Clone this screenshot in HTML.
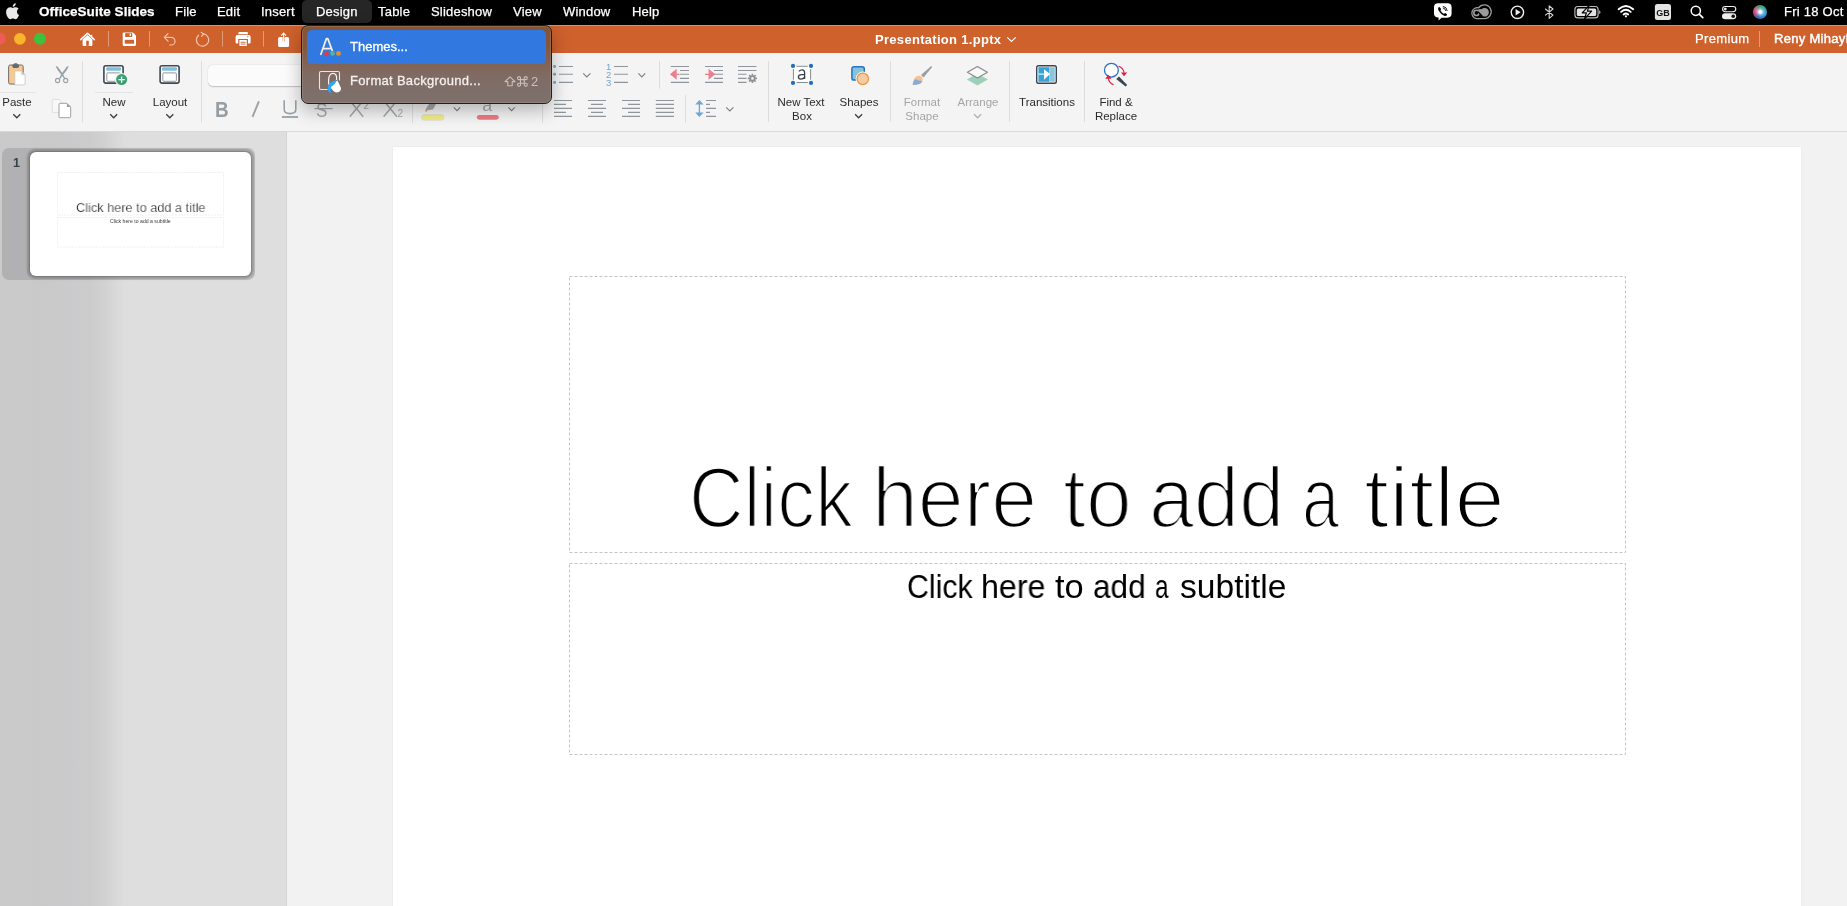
<!DOCTYPE html>
<html><head><meta charset="utf-8">
<style>
*{margin:0;padding:0;box-sizing:border-box}
html,body{width:1847px;height:906px;overflow:hidden;background:#f2f2f2;font-family:"Liberation Sans",sans-serif}
.a{position:absolute}
svg{will-change:transform}
.t{position:absolute;line-height:1;white-space:nowrap;will-change:transform;font-family:"Liberation Sans",sans-serif}
#menubar{left:0;top:0;width:1847px;height:25px;background:#000}
#menubar .t{color:#fff;font-size:13px;top:5px;letter-spacing:0.2px;-webkit-text-stroke:0.25px #fff}
#titlebar{left:0;top:25px;width:1847px;height:28px;background:#cf612c}
#toolbar{left:0;top:53px;width:1847px;height:79px;background:#f4f4f4;border-bottom:1px solid #d9d9d9;z-index:1}
#leftpanel{left:0;top:131px;width:287px;height:775px;border-right:1px solid #d3d3d3;
 background:linear-gradient(to right,#cacaca 0px,#c9c9ca 40px,#cac9cb 65px,#cccccd 90px,#d1d1d2 104px,#d8d8d8 115px,#dddddd 124px,#dedede 132px,#dedede 287px)}
#main{left:287px;top:131px;width:1560px;height:775px;background:#f2f2f2}
#slide{left:393px;top:147px;width:1408px;height:800px;background:#fff;box-shadow:0 0 1.5px rgba(0,0,0,0.08)}
.lbl{font-size:11.5px;color:#2b2b2b}
.tw{top:307.6px;font-size:85.6px;color:#000;-webkit-text-stroke:2.6px #fff;transform-origin:0 0}
.sw{top:424px;font-size:32.5px;color:#000;transform-origin:0 0}
.sep{position:absolute;width:1px;background:#dcdcdc}
</style></head><body>
<div id="menubar" class="a">
  <div class="t" style="left:39px;font-weight:bold;font-size:13.5px;letter-spacing:0.05px">OfficeSuite Slides</div>
  <div class="t" style="left:175px">File</div>
  <div class="t" style="left:217px">Edit</div>
  <div class="t" style="left:261px">Insert</div>
  <div class="a" style="left:302px;top:0;width:70px;height:23px;background:#262626;border-radius:5px"></div>
  <div class="t" style="left:316px">Design</div>
  <div class="t" style="left:378px">Table</div>
  <div class="t" style="left:431px">Slideshow</div>
  <div class="t" style="left:513px">View</div>
  <div class="t" style="left:563px">Window</div>
  <div class="t" style="left:632px">Help</div>
  <div class="t" style="left:1783.5px;letter-spacing:0.25px">Fri 18 Oct</div>
  <div class="a" style="left:1753px;top:4.8px;width:14px;height:14px;border-radius:50%;background:radial-gradient(circle at 52% 50%,#ffffff 0,#f0f6ff 14%,rgba(200,220,255,0.5) 30%,rgba(0,0,0,0) 55%),conic-gradient(from 10deg,#38a874 0deg,#2f9be0 100deg,#2f64b0 190deg,#c8467a 250deg,#e0587a 290deg,#5a8a7a 330deg,#38a874 360deg)"></div>
  <svg class="a" style="left:0;top:0" width="1847" height="24">
    <!-- apple -->
    <path transform="translate(1.3 -0.5)" d="M15.6 12.3c0-2 1.6-2.9 1.7-3-0.9-1.4-2.4-1.6-2.9-1.6-1.2-0.1-2.4 0.7-3 0.7-0.6 0-1.6-0.7-2.6-0.7-1.3 0-2.6 0.8-3.3 2-1.4 2.4-0.4 6 1 8 0.7 1 1.5 2 2.5 2 1 0 1.4-0.6 2.6-0.6 1.2 0 1.5 0.6 2.6 0.6 1.1 0 1.8-1 2.4-2 0.8-1.1 1.1-2.2 1.1-2.3 0 0-2.1-0.8-2.1-3.1z M13.7 6.2c0.5-0.7 0.9-1.6 0.8-2.5-0.8 0-1.7 0.5-2.3 1.2-0.5 0.6-0.9 1.5-0.8 2.4 0.9 0.1 1.7-0.4 2.300-1.1z" fill="#e9e9e9"/>
    <!-- viber -->
    <path d="M1438 3.2 H1447.5 Q1451.6 3.2 1451.6 7.3 V13.6 Q1451.6 17.7 1447.5 17.7 H1441.5 L1438.6 20.4 V17.6 Q1434 17.3 1434 13.4 V7.3 Q1434 3.2 1438 3.2 Z" fill="#fff"/>
    <path d="M1438.4 7.6 Q1439.2 6.6 1440 7.4 L1441 8.8 Q1441.3 9.5 1440.6 10 Q1440.4 10.4 1440.8 11 Q1441.8 12.6 1443.3 13.5 Q1443.9 13.8 1444.3 13.4 Q1444.9 12.8 1445.6 13.2 L1446.9 14.2 Q1447.5 14.9 1446.6 15.6 Q1445.6 16.4 1444.2 15.8 Q1440.5 14 1438.4 10.2 Q1437.8 8.6 1438.4 7.6 Z" fill="#000"/>
    <path d="M1443.2 6.4 Q1446.8 6.8 1447.2 10.6 M1443.2 8 Q1445.4 8.3 1445.7 10.5" fill="none" stroke="#000" stroke-width="0.9" stroke-linecap="round"/>
    <!-- creative cloud -->
    <path d="M1476.2 18.6 H1484.6 A6.9 6.9 0 1 0 1478.6 7.8 A5.4 5.4 0 0 0 1476.2 18.6 Z" fill="none" stroke="#9a9a9a" stroke-width="1.3"/>
    <circle cx="1476.4" cy="12.9" r="2.6" fill="none" stroke="#9a9a9a" stroke-width="1.6"/>
    <path d="M1477.5 9.9 Q1480 8.6 1481.6 9.2 A4.3 4.3 0 1 1 1481.5 15.3 Z" fill="#9a9a9a"/>
    <path d="M1477.6 11.4 L1482.3 16.2" stroke="#000" stroke-width="1.3"/>
    <!-- play -->
    <circle cx="1517.4" cy="12.3" r="6.2" fill="none" stroke="#f0f0f0" stroke-width="1.4"/>
    <path d="M1515.6 9.1 L1520.6 12.3 L1515.6 15.5 Z" fill="#f0f0f0"/>
    <!-- bluetooth -->
    <path d="M1545.2 8.8 L1553 15.2 L1549.2 18.4 V5.8 L1553 9 L1545.2 15.4" fill="none" stroke="#d8d8d8" stroke-width="1.1" stroke-linejoin="round"/>
    <!-- battery -->
    <rect x="1574.9" y="6.5" width="23.2" height="11.4" rx="3" fill="none" stroke="#bdbdbd" stroke-width="1.1"/>
    <rect x="1576.8" y="8.4" width="19.4" height="7.6" rx="1.5" fill="#e2e2e2"/>
    <path d="M1599.2 10.3 Q1600.4 11 1600.4 12.2 Q1600.4 13.4 1599.2 14.1 Z" fill="#bdbdbd"/>
    <path d="M1589 5.6 L1582.2 12.9 H1586.4 L1584.6 18.8 L1591.6 11.2 H1587.4 Z" fill="#e2e2e2" stroke="#000" stroke-width="1.2" stroke-linejoin="round"/>
    <!-- wifi -->
    <g fill="none" stroke="#fff" stroke-width="1.9" stroke-linecap="round">
      <path d="M1618.6 9.2 Q1625.9 2.6 1633.2 9.2"/>
      <path d="M1621.1 11.9 Q1625.9 7.8 1630.7 11.9"/>
      <path d="M1623.6 14.5 Q1625.9 12.6 1628.2 14.5"/>
    </g>
    <circle cx="1625.9" cy="16.3" r="1.1" fill="#fff"/>
    <!-- GB -->
    <rect x="1654.9" y="3.9" width="16.1" height="16" rx="2.5" fill="#e4e4e4"/>
    <text x="1662.9" y="15.6" text-anchor="middle" style="font-family:'Liberation Sans'" font-weight="bold" font-size="9" fill="#111">GB</text>
    <!-- search -->
    <circle cx="1695.8" cy="10.8" r="4.6" fill="none" stroke="#fff" stroke-width="1.5"/>
    <path d="M1699.2 14.2 L1702.8 17.6" stroke="#fff" stroke-width="1.7" stroke-linecap="round"/>
    <!-- control centre -->
    <rect x="1722.6" y="6.5" width="13.2" height="5.2" rx="2.6" fill="none" stroke="#eee" stroke-width="1.1"/>
    <circle cx="1725.3" cy="9.1" r="1.4" fill="#eee"/>
    <rect x="1722" y="13.2" width="14.2" height="6" rx="3" fill="#eee"/>
    <circle cx="1733.2" cy="16.2" r="1.8" fill="#111"/>
    </svg>
</div>
<div id="titlebar" class="a">
  <svg class="a" style="left:0;top:0" width="1847" height="28" viewBox="0 25 1847 28">
    <circle cx="-0.3" cy="38.8" r="6" fill="#ef5b5b"/>
    <circle cx="19.9" cy="38.8" r="5.9" fill="#f8b52a"/>
    <circle cx="40" cy="38.8" r="6" fill="#3ec13f"/>
    <!-- home -->
    <path d="M80.6 39.6 L87.5 33.2 L94.4 39.6" fill="none" stroke="#fff" stroke-width="1.5" stroke-linejoin="round" stroke-linecap="round"/>
    <path d="M91.6 34.8 V37" stroke="#fff" stroke-width="1.3"/>
    <path d="M82.6 39.6 L87.5 35 L92.4 39.6 V45 Q92.4 45.9 91.5 45.9 H83.5 Q82.6 45.9 82.6 45 Z" fill="#fff"/>
    <rect x="86.2" y="40.7" width="2.6" height="5.2" fill="#cf612c"/>
    <!-- save -->
    <path d="M123.8 32.6 H133 L136 35.6 V44.8 Q136 45.9 134.9 45.9 H123.8 Q122.7 45.9 122.7 44.8 V33.7 Q122.7 32.6 123.8 32.6 Z" fill="#fff"/>
    <rect x="125.2" y="33.2" width="7" height="3.8" fill="#cf612c"/>
    <rect x="129.6" y="33.6" width="1.4" height="2.6" fill="#fff"/>
    <rect x="124.8" y="39.8" width="9.2" height="3.9" fill="#cf612c"/>
    <!-- separators -->
    <g fill="#e39a76"><rect x="108" y="31" width="1" height="15.6"/><rect x="149" y="31" width="1" height="15.6"/><rect x="222" y="31" width="1" height="15.6"/><rect x="263" y="31" width="1" height="15.6"/></g>
    <!-- undo -->
    <g fill="none" stroke="#f2c4ac" stroke-width="1.2" stroke-linecap="round" stroke-linejoin="round">
      <path d="M168 33.6 L164.3 37.4 L168 41.2"/>
      <path d="M164.6 37.4 H171.2 A3.8 3.8 0 0 1 171.2 45 H169.6"/>
      <!-- redo -->
      <path d="M203.8 33.9 A6.2 6.2 0 1 1 198.6 35.2"/>
      <path d="M201.2 32.3 L203.6 34 L201.6 36.4"/>
    </g>
    <!-- print -->
    <path d="M238.6 32.1 H247.6 L248 34.2 H238.2 Z" fill="#fff"/>
    <path d="M237.3 35 H248.9 Q250.6 35 250.6 36.7 V42.6 Q250.6 43.6 249.6 43.6 H248 V39 H238.2 V43.6 H236.6 Q235.6 43.6 235.6 42.6 V36.7 Q235.6 35 237.3 35 Z" fill="#fff"/>
    <rect x="239.4" y="40" width="7.4" height="6.1" rx="0.6" fill="#fff"/>
    <rect x="240.6" y="41.8" width="5" height="0.9" fill="#cf612c"/>
    <rect x="240.6" y="43.6" width="5" height="0.9" fill="#cf612c"/>
    <circle cx="247.8" cy="36.7" r="0.6" fill="#cf612c"/>
    <!-- share -->
    <path d="M279.6 36.9 H282.7 V41.5 H284.5 V36.9 H287.6 Q289.1 36.9 289.1 38.4 V45.4 Q289.1 46.9 287.6 46.9 H279.6 Q278.1 46.9 278.1 45.4 V38.4 Q278.1 36.9 279.6 36.9 Z" fill="#fff"/>
    <path d="M283.6 42 V33.6" stroke="#fff" stroke-width="1.1"/>
    <path d="M281.2 35.6 L283.6 33 L286 35.6" fill="none" stroke="#fff" stroke-width="1.1"/>
    <!-- title chevron -->
    <path d="M1007.3 37.4 L1011.5 41.4 L1015.7 37.4" fill="none" stroke="#fff" stroke-width="1.2"/>
  </svg>
  <div class="t" style="left:875px;top:8px;font-size:13px;font-weight:bold;color:#fff;letter-spacing:0.3px">Presentation 1.pptx</div>
  <div class="a" style="left:0;top:0;width:1847px;height:1px;background:#e0906a"></div>
  <div class="t" style="left:1695px;top:7.4px;font-size:13px;color:#fff;letter-spacing:0.35px;-webkit-text-stroke:0.25px #fff">Premium</div>
  <div class="a" style="left:1759px;top:6px;width:1px;height:15.6px;background:#e39a76"></div>
  <div class="t" style="left:1774px;top:7.4px;font-size:13px;color:#fff;letter-spacing:0.3px;-webkit-text-stroke:0.45px #fff">Reny Mihaylova</div>
</div>
<div id="toolbar" class="a">
  <div class="a" style="left:207.8px;top:11.5px;width:120px;height:21px;border-radius:5px;background:#fbfbfb;box-shadow:0 0.6px 1.2px rgba(0,0,0,0.22)"></div>
  <svg class="a" style="left:0;top:0" width="1847" height="78" viewBox="0 53 1847 78">
    <!-- separators -->
    <g fill="#dddddd">
      <rect x="82" y="61.4" width="1" height="61"/>
      <rect x="201" y="61" width="1" height="61.5"/>
      <rect x="412" y="95" width="1" height="28"/>
      <rect x="542" y="95" width="1" height="28"/>
      <rect x="659" y="61" width="1" height="27.6"/>
      <rect x="685" y="95" width="1" height="28"/>
      <rect x="768" y="61" width="1" height="61"/>
      <rect x="890" y="61" width="1" height="61"/>
      <rect x="1009" y="61" width="1" height="61"/>
      <rect x="1084" y="61" width="1" height="61"/>
      <rect x="0" y="92" width="36" height="1" fill="#e3e3e3"/>
      <rect x="95" y="92" width="38" height="1" fill="#e3e3e3"/>
    </g>
    <!-- paste -->
    <rect x="8.6" y="65" width="14.6" height="19.1" rx="1.6" fill="#f9c88c" stroke="#5d6368" stroke-width="0.9"/>
    <rect x="12.4" y="64.2" width="6.6" height="3.7" rx="1.4" fill="#62696f"/>
    <rect x="14" y="63.2" width="3.4" height="1.6" rx="0.8" fill="#62696f"/>
    <path d="M15.6 71 H21.4 L25.1 74.7 V84 Q25.1 84.9 24.2 84.9 H15.7 Q14.8 84.9 14.8 84 V71.8 Q14.8 71 15.6 71 Z" fill="#fff" stroke="#c2c5c8" stroke-width="0.8"/>
    <path d="M21.4 71 L25.1 74.7 H21.4 Z" fill="#bfc3c6"/>
    <!-- scissors -->
    <path d="M55.6 66.2 Q56.6 66 57.6 66.6 L62.6 73.6 Q63.6 75.4 64.6 77.2 L65.4 78.5 L64.4 78.9 L61.4 75 Q57.2 70.2 55.6 66.2 Z" fill="#9aa0a4"/>
    <path d="M68.8 66.2 Q67.8 66 66.8 66.6 L61.8 73.6 Q60.8 75.4 59.8 77.2 L59 78.5 L60 78.9 L63 75 Q67.2 70.2 68.8 66.2 Z" fill="#9aa0a4"/>
    <g fill="none" stroke="#9aa0a4"><circle cx="57.6" cy="80.5" r="2.1" stroke-width="1.1"/><circle cx="65.7" cy="80.5" r="2.1" stroke-width="1.1"/></g>
    <circle cx="62.2" cy="74.3" r="0.9" fill="#7fb6dc"/>
    <!-- copy -->
    <path d="M53.1 99.4 H59 L61.5 101.9 V111.6 Q61.5 112.4 60.7 112.4 H53.1 Q52.3 112.4 52.3 111.6 V100.2 Q52.3 99.4 53.1 99.4 Z" fill="#f8f8f8" stroke="#dcdcdc" stroke-width="0.9"/>
    <path d="M59.8 103.3 H66.9 L70.7 107.1 V116.9 Q70.7 117.7 69.9 117.7 H59.8 Q59 117.7 59 116.9 V104.1 Q59 103.3 59.8 103.3 Z" fill="#fff" stroke="#9aa0a4" stroke-width="1"/>
    <path d="M66.9 103.3 L70.7 107.1 H66.9 Z" fill="#9aa0a4"/>
    <!-- new -->
    <rect x="103.9" y="65.7" width="19.2" height="17.4" rx="2" fill="#fff" stroke="#3d4852" stroke-width="1.6"/>
    <rect x="106.1" y="67.2" width="14.9" height="3.5" rx="1" fill="#7fc0dc"/>
    <rect x="106.8" y="72.9" width="13.8" height="8.4" rx="1" fill="#fff" stroke="#8a8a8a" stroke-width="0.9"/>
    <circle cx="121.6" cy="79.6" r="6.7" fill="#f4f4f4"/>
    <circle cx="121.6" cy="79.6" r="5.5" fill="#36a06e"/>
    <path d="M118.4 79.6 H124.8 M121.6 76.4 V82.8" stroke="#fff" stroke-width="1.4"/>
    <!-- layout -->
    <rect x="160.1" y="65.7" width="19" height="17.4" rx="2" fill="#fff" stroke="#3d4852" stroke-width="1.6"/>
    <rect x="162" y="67.2" width="15" height="3.5" rx="1" fill="#7fc0dc"/>
    <rect x="162.8" y="72.9" width="13.6" height="8.4" rx="1" fill="#fff" stroke="#8a8a8a" stroke-width="0.9"/>
    <!-- chevrons -->
    <g fill="none" stroke="#3a3f44" stroke-width="1.3">
      <path d="M13.3 114.3 L16.8 117.8 L20.3 114.3"/>
      <path d="M110.2 114.3 L113.7 117.8 L117.2 114.3"/>
      <path d="M166.3 114.3 L169.8 117.8 L173.3 114.3"/>
      <path d="M855.1 114.3 L858.6 117.8 L862.1 114.3"/>
    </g>
    <path d="M974.1 114.3 L977.6 117.8 L981.1 114.3" fill="none" stroke="#b0b0b0" stroke-width="1.3"/>
    <g fill="none" stroke="#7a7f84" stroke-width="1.1">
      <path d="M453.8 107.4 L457 110.6 L460.2 107.4"/>
      <path d="M508.4 107.4 L511.6 110.6 L514.8 107.4"/>
      <path d="M583.2 73.4 L586.8 77 L590.4 73.4"/>
      <path d="M638.4 73.4 L641.8 77 L645.2 73.4"/>
      <path d="M726.2 107.4 L729.8 111 L733.4 107.4"/>
    </g>
    <!-- B I U S X2 X2 -->
    <text x="215" y="117" style="font-family:'Liberation Sans'" font-weight="bold" font-size="22" fill="#969ea3" transform="translate(215 0) scale(0.86 1) translate(-215 0)">B</text>
    <path d="M258.9 101.3 L252.5 116.9" stroke="#9aa1a6" stroke-width="1.9"/>
    <path d="M284.2 100.2 V109.6 Q284.2 113.6 290 113.6 Q295.8 113.6 295.8 109.6 V100.2" fill="none" stroke="#9aa1a6" stroke-width="1.6"/>
    <rect x="281.9" y="116.1" width="16.1" height="1.8" fill="#9aa1a6"/>
    <text x="316" y="116.7" style="font-family:'Liberation Sans'" font-size="20" fill="#a3a9ad" transform="translate(316 0) scale(0.85 1) translate(-316 0)">S</text>
    <rect x="314.6" y="108" width="18" height="1.2" fill="#a3a9ad"/>
    <g stroke="#a3a9ad" stroke-width="1.5">
      <path d="M349.8 100.5 L363.2 116.7 M363.2 100.5 L349.8 116.7"/>
      <path d="M383.6 100.5 L397 116.7 M397 100.5 L383.6 116.7"/>
    </g>
    <text x="363.4" y="109" style="font-family:'Liberation Sans'" font-size="10" fill="#a3a9ad">2</text>
    <text x="397.4" y="116.9" style="font-family:'Liberation Sans'" font-size="10" fill="#a3a9ad">2</text>
    <!-- highlighter -->
    <path d="M425 110.6 L429.6 103 L438.4 99.6 L433 109.4 Z" fill="#a5a9ad"/>
    <path d="M425 110.6 L427.8 109 L426.4 112.6 Z" fill="#f09a6a"/>
    <rect x="421.6" y="114.6" width="22.4" height="5.6" rx="2.8" fill="#f2ed86" stroke="#dadad0" stroke-width="0.7"/>
    <text x="482.2" y="111" style="font-family:'Liberation Sans'" font-size="17" fill="#a3a9ad" transform="translate(482 0) scale(1.05 1) translate(-482 0)">a</text>
    <rect x="476.8" y="114.9" width="22" height="4.8" rx="2.4" fill="#ee7a82"/>
    <!-- bullets -->
    <g fill="#6fa6d6"><circle cx="554.6" cy="66.5" r="1.45"/><circle cx="554.6" cy="74.3" r="1.45"/><circle cx="554.6" cy="82.4" r="1.45"/></g>
    <g stroke="#8f959a" stroke-width="1.1" fill="none">
      <path d="M559 66.5 H573 M559 74.3 H573 M559 82.4 H573"/>
      <path d="M614 66.5 H628 M614 74.3 H628 M614 82.4 H628"/>
      <path d="M670.8 66.5 H689 M680 70.5 H689 M680 74.3 H689 M680 78.4 H689 M670.8 82.4 H689"/>
      <path d="M705 66.5 H723 M714 70.5 H723 M714 74.3 H723 M714 78.4 H723 M705 82.4 H723"/>
      <path d="M738 66.5 H756.5 M738 70.5 H756.5 M738 74.3 H746.5 M738 78.4 H746.5 M738 82.4 H746.5"/>
      <path d="M554 100.5 H572 M554 104.4 H566 M554 108.4 H572 M554 112.4 H566 M554 116.4 H572"/>
      <path d="M588 100.5 H606 M591 104.4 H603 M588 108.4 H606 M591 112.4 H603 M588 116.4 H606"/>
      <path d="M622 100.5 H640 M628 104.4 H640 M622 108.4 H640 M628 112.4 H640 M622 116.4 H640"/>
      <path d="M655.8 100.5 H674 M655.8 104.4 H674 M655.8 108.4 H674 M655.8 112.4 H674 M655.8 116.4 H674"/>
      <path d="M706 100.5 H716 M706 104.4 H710 M706 108.4 H716 M706 112.4 H710 M706 116.4 H716"/>
    </g>
    <g style="font-family:'Liberation Sans'" font-size="9.5" fill="#6fa6d6"><text x="606" y="70.2">1</text><text x="606" y="78">2</text><text x="606" y="86.1">3</text></g>
    <path d="M671 74.3 L676 70.2 V78.4 Z M675 74.3 H679.5" fill="#e8808f" stroke="#e8808f" stroke-width="1.3"/>
    <path d="M714.2 74.3 L709.2 70.2 V78.4 Z M705 74.3 H710" fill="#e8808f" stroke="#e8808f" stroke-width="1.3"/>
    <g transform="translate(752.4 78.4)" fill="#909090">
      <circle r="3.1"/>
      <g stroke="#909090" stroke-width="1.6"><path d="M0 -4.6 V4.6 M-4.6 0 H4.6 M-3.25 -3.25 L3.25 3.25 M3.25 -3.25 L-3.25 3.25"/></g>
      <circle r="1.3" fill="#f4f4f4"/>
    </g>
    <!-- line spacing -->
    <path d="M699.4 102.5 V114.5" stroke="#6fa6d6" stroke-width="1.3"/>
    <path d="M695.2 104.4 L699.4 99.9 L703.6 104.4 Z M695.2 112.6 L699.4 117.1 L703.6 112.6 Z" fill="#6fa6d6"/>
    <!-- new text box -->
    <rect x="793.4" y="66.3" width="17.2" height="16.3" fill="#fff"/>
    <g stroke="#878b90" stroke-width="1"><path d="M796.5 66.3 H807.8 M796.5 82.5 H807.8 M793.4 69.1 V79.7 M810.6 69.1 V79.7"/></g>
    <g fill="#1f6fc0"><circle cx="793" cy="65.9" r="2.1"/><circle cx="811" cy="65.9" r="2.1"/><circle cx="793" cy="82.9" r="2.1"/><circle cx="811" cy="82.9" r="2.1"/></g>
    <path d="M798.8 71.4 Q800.2 69.9 802 69.9 Q804.6 69.9 804.6 72.8 V79.1 M804.6 74.7 H801.6 Q798.4 74.7 798.4 77 Q798.4 79.1 800.8 79.1 Q803.4 79.1 804.6 77.1" fill="none" stroke="#3a4047" stroke-width="1.3"/>
    <!-- shapes -->
    <rect x="851.9" y="66.7" width="12.4" height="13.4" rx="2.2" fill="#82c4dc" stroke="#2a72c0" stroke-width="1.5"/>
    <circle cx="862.8" cy="78.8" r="7.2" fill="#f4f4f4"/>
    <circle cx="862.8" cy="78.8" r="5.7" fill="#f3cba5" stroke="#f0912e" stroke-width="1.2"/>
    <!-- format shape brush -->
    <path d="M931.2 66 L932.2 67 L923.6 77.4 L921 74.9 Z" fill="#9aa0a4"/>
    <path d="M912.6 84.8 Q913 79.2 915.4 77.2 Q918.4 74.8 921.4 76.6 Q923.4 79 922 82.2 Q919.2 85.4 912.6 84.8 Z" fill="#f8c08f"/>
    <path d="M912.6 84.8 Q913.4 80.6 915.2 79.6 Q917.4 79 918.4 80.6 Q920.2 80 922.2 81.6 Q919.2 85.4 912.6 84.8 Z" fill="#7eaedb"/>
    <!-- arrange -->
    <path d="M966.9 79.4 L977.4 73.4 L987.9 79.4 L977.4 85.4 Z" fill="#9dd0b8"/>
    <path d="M967.4 72.3 L977.4 66.6 L987.4 72.3 L977.4 78 Z" fill="#f8f8f8" stroke="#8a8a8a" stroke-width="1.2" stroke-linejoin="round"/>
    <!-- transitions -->
    <rect x="1036.7" y="65.7" width="19.6" height="17.6" rx="1.8" fill="#fff" stroke="#3a4550" stroke-width="1.4"/>
    <rect x="1038.4" y="67.2" width="10.8" height="14.6" fill="#35a3d8"/>
    <rect x="1049.2" y="67.2" width="5.6" height="14.6" fill="#8ec5dc"/>
    <rect x="1038.4" y="73.6" width="6" height="1" fill="#fff"/>
    <path d="M1044 69.3 L1050 74.1 L1044 79.7 Z" fill="#fff"/>
    <!-- find replace -->
    <path d="M1116.2 79 L1119 76.4 L1127.2 85 L1125.6 86.4 Z" fill="#3a4550"/>
    <circle cx="1111.4" cy="70.2" r="6.9" fill="#fff" stroke="#2a72c0" stroke-width="1.3"/>
    <g fill="none" stroke="#e01a3c" stroke-width="1.1"><path d="M1118.6 66.3 Q1123.2 67.8 1124 72.6"/><path d="M1113.6 84.6 Q1109 83.2 1108.4 78.4"/></g>
    <path d="M1121 72.4 H1127.2 L1124 76.2 Z M1105.2 78.8 H1111.6 L1108.4 75 Z" fill="#e01a3c"/>
  </svg>
  <div class="t lbl" style="left:-33px;width:100px;text-align:center;top:43.7px">Paste</div>
  <div class="t lbl" style="left:64px;width:100px;text-align:center;top:43.7px">New</div>
  <div class="t lbl" style="left:120px;width:100px;text-align:center;top:43.7px">Layout</div>
  <div class="t lbl" style="left:751px;width:100px;text-align:center;top:43.7px">New Text</div>
  <div class="t lbl" style="left:751.5px;width:100px;text-align:center;top:57.5px">Box</div>
  <div class="t lbl" style="left:809px;width:100px;text-align:center;top:43.7px">Shapes</div>
  <div class="t lbl" style="left:871.5px;width:100px;text-align:center;top:43.7px;color:#a5a5a5">Format</div>
  <div class="t lbl" style="left:872px;width:100px;text-align:center;top:57.5px;color:#a5a5a5">Shape</div>
  <div class="t lbl" style="left:927.7px;width:100px;text-align:center;top:43.7px;color:#a5a5a5">Arrange</div>
  <div class="t lbl" style="left:997px;width:100px;text-align:center;top:43.7px">Transitions</div>
  <div class="t lbl" style="left:1065.5px;width:100px;text-align:center;top:43.7px">Find &amp;</div>
  <div class="t lbl" style="left:1065.8px;width:100px;text-align:center;top:57.5px">Replace</div>
</div>
<div id="leftpanel" class="a">
  <div class="a" style="left:2px;top:17px;width:253px;height:132px;border-radius:7px;background:rgba(60,55,60,0.17)"></div>
  <div class="t" style="left:12.8px;top:25.5px;font-size:12.5px;font-weight:bold;color:#37434c">1</div>
  <div class="a" style="left:29.6px;top:20.7px;width:221.5px;height:124.3px;border-radius:6px;background:#fff;box-shadow:0 0 0 1px rgba(0,0,0,0.13),0 0 2px 2.5px rgba(0,0,0,0.2)"></div>
  <svg class="a" style="left:0;top:0" width="287" height="160" viewBox="0 131 287 160">
    <rect x="57.5" y="172.5" width="166" height="42.5" fill="none" stroke="#ececec" stroke-width="0.8" stroke-dasharray="2 1"/>
    <rect x="57.5" y="217.5" width="166" height="29.5" fill="none" stroke="#ececec" stroke-width="0.8" stroke-dasharray="2 1"/>
  </svg>
  <div id="tt" class="t" style="left:76.3px;top:69.8px;font-size:13.2px;color:#111;-webkit-text-stroke:0.25px #fff;transform:scaleX(0.965);transform-origin:0 0">Click here to add a title</div>
  <div class="t" style="left:109.8px;top:88.2px;font-size:5px;color:#3a3a3a;transform:scaleX(1.03);transform-origin:0 0">Click here to add a subtitle</div>
</div>
<div id="main" class="a"></div>
<div id="slide" class="a">
  <svg class="a" style="left:0;top:0" width="1408" height="800">
    <rect x="176.5" y="129.5" width="1056" height="276" fill="none" stroke="#c4c4c4" stroke-width="1" stroke-dasharray="3 2"/>
    <rect x="176.5" y="416.5" width="1056" height="191" fill="none" stroke="#c4c4c4" stroke-width="1" stroke-dasharray="3 2"/>
  </svg>
  <div class="t tw" style="left:295.6px;transform:scaleX(0.884)">Click</div>
  <div class="t tw" style="left:478.96px;transform:scaleX(0.963)">here</div>
  <div class="t tw" style="left:669.5px;transform:scaleX(0.963)">to</div>
  <div class="t tw" style="left:756.3px;transform:scaleX(0.946)">add</div>
  <div class="t tw" style="left:909.1px;transform:scaleX(0.78)">a</div>
  <div class="t tw" style="left:970.9px;transform:scaleX(1.056)">title</div>
  <div class="t sw" style="left:513.8px;transform:scaleX(0.931)">Click</div>
  <div class="t sw" style="left:588.2px;transform:scaleX(0.99)">here</div>
  <div class="t sw" style="left:662.4px;transform:scaleX(1.06)">to</div>
  <div class="t sw" style="left:700.3px;transform:scaleX(0.97)">add</div>
  <div class="t sw" style="left:762.25px;transform:scaleX(0.75)">a</div>
  <div class="t sw" style="left:786.7px;transform:scaleX(1.033)">subtitle</div>
  
</div>
<div id="menu" class="a" style="z-index:5;left:301px;top:25px;width:251px;height:79px;border-radius:7px;border:1px solid #1e1e1e;background:linear-gradient(to bottom,#845437 0px,#845538 18px,#826050 34px,#7f6b64 50px,#7e716d 78px);box-shadow:0 6px 18px rgba(0,0,0,0.28),inset 0 0 0 1px rgba(255,235,220,0.14)">
  <div class="a" style="left:5px;top:4px;width:239px;height:34px;border-radius:5px;background:#3179e0"></div>
  <svg class="a" style="left:17px;top:11px" width="26" height="21" viewBox="0 0 26 21">
    <path d="M1.6 18 L7.4 1.6 L8.8 1.6 L13.4 14 M4.6 11.6 H11.6" fill="none" stroke="#f6efe6" stroke-width="1.7" stroke-linejoin="round"/>
    <circle cx="7.5" cy="16.4" r="2.4" fill="#e8393a"/>
    <circle cx="13.5" cy="16.4" r="2.4" fill="#4fb59a"/>
    <circle cx="19.5" cy="16.4" r="2.4" fill="#ec8f22"/>
  </svg>
  <div class="t" style="left:48px;top:14.2px;font-size:13px;color:#fff;-webkit-text-stroke:0.3px #fff">Themes...</div>
  <svg class="a" style="left:16.2px;top:44.3px" width="26" height="24" viewBox="0 0 26 24">
    <path d="M9.5 19.5 H3 Q1.5 19.5 1.5 18 V3 Q1.5 1.5 3 1.5 H20 Q21.5 1.5 21.5 3 V10.5" fill="none" stroke="#ebe6e4" stroke-width="1.1"/>
    <path d="M10.8 14.6 C9.8 6 12.3 3.3 14.8 3.3 C17.8 3.3 19.2 5.8 18.5 10.2" fill="none" stroke="#f8f6f5" stroke-width="1.2"/>
    <path d="M11 15.5 L19.5 10.5 L23 18 Q23.2 21.5 19.8 22.3 Q16.8 22.8 15 20.5 Z" fill="#fff"/>
    <path d="M10.2 15.4 Q12.8 10.8 18.6 10 Q18 13.8 13.4 16.6 Q12.4 19.4 12.9 22.6 Q10.8 23.4 10.2 20.4 Q9.7 17.6 10.2 15.4 Z" fill="#2aa9f4"/>
  </svg>
  <div class="t" style="left:47.6px;top:48.2px;font-size:13px;color:#f4f0ee;-webkit-text-stroke:0.3px #f4f0ee;letter-spacing:0.3px">Format Background...</div>
  <svg class="a" style="left:202px;top:50.2px" width="28" height="11" viewBox="0 0 28 11">
    <path d="M6 0.8 L11 5.6 H8.2 V9.8 H3.8 V5.6 H1 Z" fill="none" stroke="#c9bfbb" stroke-width="1.1" stroke-linejoin="round"/>
    <g fill="none" stroke="#c9bfbb" stroke-width="1.1"><path d="M16.5 3.6 H20.3 V7.2 H16.5 Z"/><path d="M16.5 3.6 V2.3 A1.5 1.5 0 1 0 15 3.6 H16.5 M20.3 3.6 V2.3 A1.5 1.5 0 1 1 21.8 3.6 H20.3 M16.5 7.2 V8.5 A1.5 1.5 0 1 1 15 7.2 H16.5 M20.3 7.2 V8.5 A1.5 1.5 0 1 0 21.8 7.2 H20.3"/></g>
  </svg>
  <div class="t" style="left:228.5px;top:48.6px;font-size:13px;color:#c9bfbb">2</div>
</div>
</body></html>
